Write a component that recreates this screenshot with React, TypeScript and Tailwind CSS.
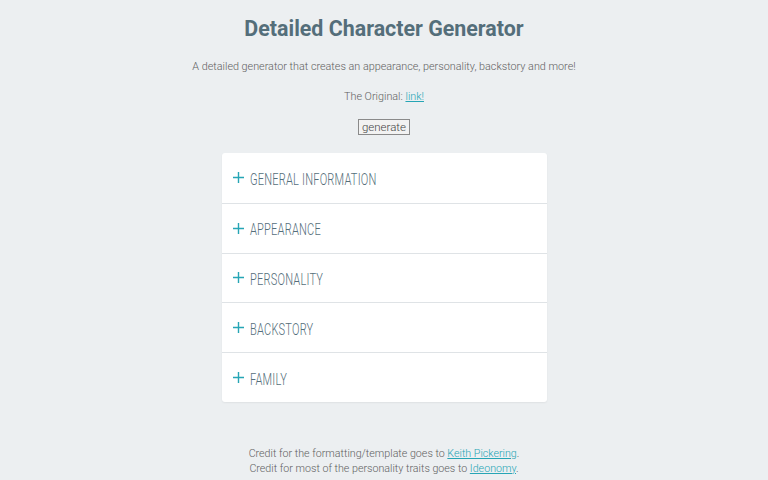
const sections = [
  "GENERAL INFORMATION",
  "APPEARANCE",
  "PERSONALITY",
  "BACKSTORY",
  "FAMILY",
];

const Plus = () => (
  <svg width="11" height="11" viewBox="0 0 11 11" className="shrink-0">
    <path d="M5.5 0v11M0 5.5h11" stroke="#26a5b5" strokeWidth="1.4" />
  </svg>
);

export default function App() {
  return (
    <div className="min-h-[480px] bg-[#eceff1] font-['Roboto',sans-serif] font-light text-[#616161] flex flex-col items-center">
      <h1 className="mt-[15px] text-[21.4px] font-bold text-[#546e7a] leading-[28px]">
        Detailed Character Generator
      </h1>
      <p className="mt-[17px] text-[10.8px] leading-[14px]">
        A detailed generator that creates an appearance, personality, backstory and more!
      </p>
      <p className="mt-[16px] text-[10.8px] leading-[14px]">
        The Original:{" "}
        <a href="#" className="text-[#26a5b5] underline">
          link!
        </a>
      </p>
      <button className="mt-[15px] h-[16px] px-[3px] border border-[#8a8a8a] bg-[#f2f2f2] text-[11.5px] leading-[12px] text-[#444]">
        generate
      </button>
      <div className="mt-[18px] w-[325px] bg-white rounded-[3px] shadow-[0_1px_2px_rgba(0,0,0,0.06)]">
        {sections.map((s, i) => (
          <div
            key={s}
            className={
              "h-[49.8px] flex items-center gap-[6px] pl-[11px] " +
              (i > 0 ? "border-t border-[#dfe3e6]" : "")
            }
          >
            <Plus />
            <span className="inline-block origin-left scale-x-[0.69] translate-y-[1.5px] font-light text-[16px] tracking-[0.3px] text-[#546e7a] whitespace-nowrap">
              {s}
            </span>
          </div>
        ))}
      </div>
      <div className="mt-[44px] text-[10.7px] leading-[15px] text-center">
        <p>
          Credit for the formatting/template goes to{" "}
          <a href="#" className="text-[#26a5b5] underline">Keith Pickering</a>.
        </p>
        <p>
          Credit for most of the personality traits goes to{" "}
          <a href="#" className="text-[#26a5b5] underline">Ideonomy</a>.
        </p>
      </div>
    </div>
  );
}
